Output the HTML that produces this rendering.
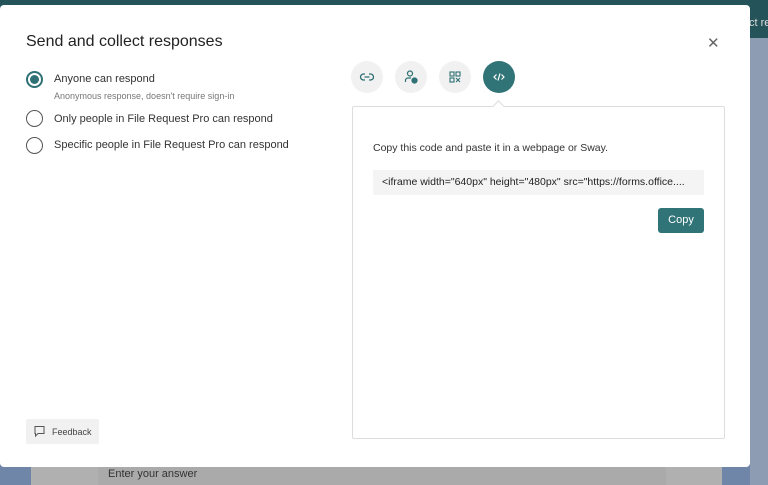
<!DOCTYPE html>
<html><head><style>
*{margin:0;padding:0;box-sizing:border-box}
body{width:768px;height:485px;overflow:hidden;position:relative;font-family:"Liberation Sans",sans-serif;background:#6f86a8}
.top{position:absolute;left:0;top:0;width:768px;height:38px;background:#24545a}
.rbg{position:absolute;left:750px;top:38px;width:18px;height:447px;background:#8e9cb3}
.gray{position:absolute;left:31px;top:440px;width:691px;height:45px;background:#b0b0b0}
.gray2{position:absolute;left:98px;top:440px;width:568px;height:45px;background:#aaaaaa}
.ans{position:absolute;left:108px;top:468px;font-size:11px;color:#333}
.ct{position:absolute;left:749px;top:17px;font-size:11px;color:#ddd;white-space:nowrap}
.modal{position:absolute;left:0;top:5px;width:750px;height:462px;background:#fff;border-radius:4px}
h1{position:absolute;left:26px;top:28px;font-size:16px;font-weight:normal;color:#222;line-height:18px}
.x{position:absolute;left:707px;top:29px;font-size:15px;color:#666;font-weight:300}
.rad{position:absolute;left:26px;width:17px;height:17px;border:1.3px solid #555;border-radius:50%}
.rad.on{border:2px solid #2f7174}
.rad.on::after{content:"";position:absolute;left:2px;top:2px;width:9px;height:9px;border-radius:50%;background:#2f7174}
.lab{position:absolute;left:54px;font-size:11px;color:#333;line-height:13px}
.sub{position:absolute;left:54px;font-size:9px;color:#777;line-height:11px}
.ic{position:absolute;top:56px;width:32px;height:32px;border-radius:50%;background:#f1f1f1}
.ic svg{position:absolute;left:8px;top:8px}
.panel{position:absolute;left:352px;top:101px;width:373px;height:333px;border:1px solid #ddd;border-radius:2px}
.txt{position:absolute;left:373px;top:137px;font-size:10.5px;color:#333}
.code{position:absolute;left:373px;top:165px;width:331px;height:25px;background:#f4f4f4;border-radius:2px;font-size:10.5px;color:#222;padding:6px 0 0 9px;white-space:nowrap;overflow:hidden}
.copy{position:absolute;left:658px;top:203px;width:46px;height:25px;background:#317477;border-radius:3px;color:#fff;font-size:11px;text-align:center;line-height:25px}
.fb{position:absolute;left:26px;top:414px;width:73px;height:25px;background:#f1f1f1;border-radius:2px;font-size:9px;color:#444;padding:8px 0 0 26px}
</style></head><body>
<div class="top"></div><div class="rbg"></div>
<div class="gray"></div><div class="gray2"></div>
<div class="ans">Enter your answer</div>
<div class="ct">ct re</div>
<div class="modal">
<h1>Send and collect responses</h1>
<div class="x">✕</div>
<div class="rad on" style="top:66px"></div>
<div class="lab" style="top:68px">Anyone can respond</div>
<div class="sub" style="top:86px">Anonymous response, doesn't require sign-in</div>
<div class="rad" style="top:105px"></div>
<div class="lab" style="top:108px">Only people in File Request Pro can respond</div>
<div class="rad" style="top:132px"></div>
<div class="lab" style="top:134px">Specific people in File Request Pro can respond</div>
<div class="ic" style="left:351px"><svg width="16" height="16" viewBox="0 0 16 16" fill="none" stroke="#2f7174" stroke-width="1.3"><path d="M6 5H4.5a3 3 0 0 0 0 6H6M10 5h1.5a3 3 0 0 1 0 6H10M5.5 8h5"/></svg></div>
<div class="ic" style="left:395px"><svg width="16" height="16" viewBox="0 0 16 16" fill="none" stroke="#2f7174" stroke-width="1.2"><circle cx="7" cy="4.5" r="2.5"/><path d="M2.5 13v-1.5a2.5 2.5 0 0 1 2.5-2.5h3"/><circle cx="11.5" cy="11.5" r="2.5" fill="#2f7174"/></svg></div>
<div class="ic" style="left:439px"><svg width="16" height="16" viewBox="0 0 16 16" fill="none" stroke="#2f7174" stroke-width="1.1"><rect x="3" y="3" width="4" height="4"/><rect x="9" y="3" width="4" height="4"/><rect x="3" y="9" width="4" height="4"/><path d="M9 9l4 4M13 9l-4 4"/></svg></div>
<div class="ic" style="left:483px;background:#317477"><svg width="16" height="16" viewBox="0 0 16 16" fill="none" stroke="#fff" stroke-width="1.2"><path d="M5.5 5.5L3 8l2.5 2.5M10.5 5.5L13 8l-2.5 2.5M9 4.5l-2 7"/></svg></div>
<div class="panel"></div>
<div style="position:absolute;left:494px;top:97px;width:9px;height:9px;background:#fff;border-left:1px solid #ddd;border-top:1px solid #ddd;transform:rotate(45deg)"></div>
<div class="txt">Copy this code and paste it in a webpage or Sway.</div>
<div class="code">&lt;iframe width="640px" height="480px" src="https://forms.office....</div>
<div class="copy">Copy</div>
<div class="fb"><svg style="position:absolute;left:7px;top:6px" width="13" height="13" viewBox="0 0 13 13" fill="none" stroke="#555" stroke-width="1"><path d="M2 1.5h9v7H5l-2.5 2.5v-2.5H2z"/></svg>Feedback</div>
</div>
</body></html>
